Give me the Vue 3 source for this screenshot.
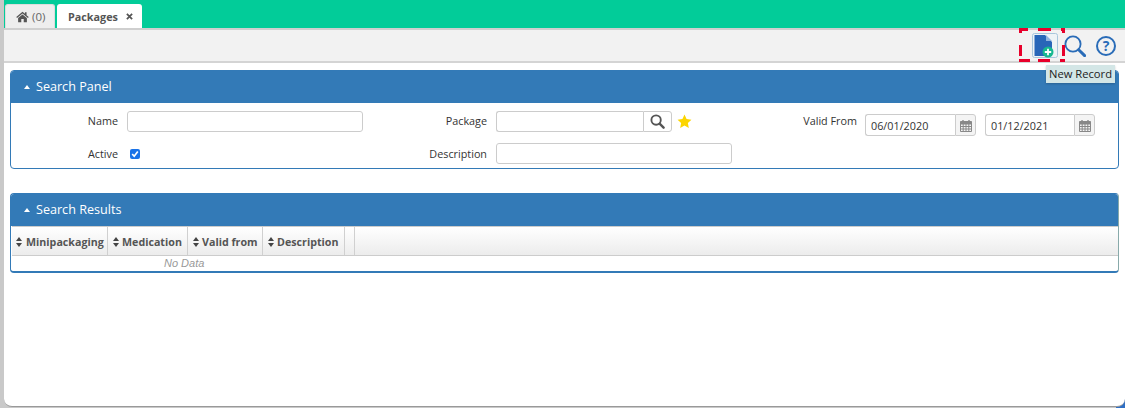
<template>
  <div class="page">
    <div class="gutter"></div>
    <div class="main">
      <div class="tabbar">
        <div class="tab home">
          <svg class="home-ico" viewBox="0 0 16 14" width="13" height="12"><path fill="#555" d="M8 0.5 L0.3 7 L1.3 8.2 L8 2.6 L14.7 8.2 L15.7 7 L13 4.7 V1 H11 V3 Z M8 3.8 L2.6 8.3 V13.5 H6.5 V9.5 H9.5 V13.5 H13.4 V8.3 Z"/></svg>
          <span class="count">(0)</span>
        </div>
        <div class="tab active">
          <span class="tab-title">Packages</span>
          <svg class="close" viewBox="0 0 8 8" width="7" height="7"><path d="M1 1 L7 7 M7 1 L1 7" stroke="#555" stroke-width="2"/></svg>
        </div>
      </div>

      <div class="toolbar">
        <div class="tool-wrap">
          <svg class="doc" viewBox="0 0 26 25" width="26" height="25">
            <rect x="0.5" y="0.5" width="25" height="24" rx="2" fill="#eef3f6" stroke="#a9c6dc"/>
            <path d="M2.5 2 H13 L20 9 V23 H2.5 Z" fill="#2866b8"/>
            <path d="M14 2 L20 8 H14 Z" fill="#8fb3de"/>
            <circle cx="16" cy="19" r="5.5" fill="#17b890"/>
            <path d="M16 15.8 V22.2 M12.8 19 H19.2" stroke="#fff" stroke-width="1.8"/>
          </svg>
          <svg class="dash" viewBox="0 0 46 34" width="46" height="34">
            <path fill="none" stroke="#e8002b" stroke-width="3" d="M0 1.5H9 M19 1.5H32 M42 1.5H46 M0 32.5H11 M19 32.5H31 M41 32.5H46 M1.5 0V5 M1.5 17V28 M1.5 32V34 M44.5 0V5 M44.5 17V28 M44.5 32V34"/>
          </svg>
        </div>
        <svg class="search" viewBox="0 0 24 24" width="22" height="22"><circle cx="9.8" cy="9.8" r="8.3" fill="none" stroke="#2a6cb8" stroke-width="2"/><path d="M16 16 L22.5 22.5" stroke="#2a6cb8" stroke-width="3.2" stroke-linecap="round"/></svg>
        <span class="help">?</span>
        <div class="tooltip">New Record</div>
      </div>

      <section class="panel search-panel">
        <header class="panel-head"><span class="caret"></span>Search Panel</header>
        <div class="form">
          <label class="lbl first">Name</label>
          <div class="field"><input class="input wide" type="text" /></div>
          <label class="lbl first">Package</label>
          <div class="field pkg">
            <div class="group">
              <input class="input grouped" type="text" />
              <span class="addon lookup">
                <svg viewBox="0 0 16 16" width="15" height="15"><circle cx="6.5" cy="6.5" r="5" fill="none" stroke="#555" stroke-width="2"/><path d="M10.5 10.5 L14.5 14.5" stroke="#555" stroke-width="2.6" stroke-linecap="round"/></svg>
              </span>
            </div>
            <svg class="star" viewBox="0 0 16 16" width="15" height="15"><path fill="#fcd500" d="M8 0.6 L10.2 5.4 L15.4 6 L11.6 9.6 L12.6 14.8 L8 12.2 L3.4 14.8 L4.4 9.6 L0.6 6 L5.8 5.4 Z"/></svg>
          </div>
          <label class="lbl first l3">Valid From</label>
          <div class="field dates">
            <div class="group date" v-for="d in dates" :key="d.v" :style="{ width: d.w + 'px' }">
              <input class="input grouped tall" type="text" :value="d.v" />
              <span class="addon cal">
                <svg viewBox="0 0 12 13" width="12" height="13"><path d="M0.5 2.5 H11.5 V12.5 H0.5 Z M0.5 5 H11.5 M0.5 7.5 H11.5 M0.5 10 H11.5 M3.2 5 V12.5 M6 5 V12.5 M8.8 5 V12.5" fill="none" stroke="#888" stroke-width="1"/><path d="M0.5 2.5 H11.5 V5 H0.5 Z" fill="#888"/><path d="M3 1 V3 M9 1 V3" stroke="#888" stroke-width="1.4"/></svg>
              </span>
            </div>
          </div>

          <label class="lbl">Active</label>
          <div class="field check"><span class="checkbox"><svg viewBox="0 0 10 10" width="10" height="10"><path d="M2.2 5 L4.2 7.2 L7.8 2.6" fill="none" stroke="#fff" stroke-width="1.7"/></svg></span></div>
          <label class="lbl">Description</label>
          <div class="field"><input class="input wide" type="text" /></div>
          <div></div>
          <div></div>
        </div>
      </section>

      <section class="panel results-panel">
        <header class="panel-head"><span class="caret"></span>Search Results</header>
        <div class="thead">
          <div class="th" v-for="c in cols" :key="c.t" :style="{ width: c.w + 'px' }">
            <span class="sort"><i class="up"></i><i class="down"></i></span>{{ c.t }}
          </div>
          <div class="th spacer"></div>
          <div class="th fill"></div>
        </div>
        <div class="nodata">No Data</div>
      </section>
      <div class="grow"></div>
    </div>
  </div>
</template>

<script setup>
const dates = [
  { v: '06/01/2020', w: 111 },
  { v: '01/12/2021', w: 110 }
]
const cols = [
  { t: 'Minipackaging', w: 96 },
  { t: 'Medication', w: 80 },
  { t: 'Valid from', w: 75 },
  { t: 'Description', w: 82 }
]
</script>

<style>
html, body { margin: 0; padding: 0; background: #fff; overflow: hidden; }
</style>

<style scoped>
.page {
  width: 1125px;
  height: 408px;
  display: flex;
  font-family: "Open Sans", sans-serif;
  font-size: 10.8px;
  color: #333;
  background: linear-gradient(90deg, #c9c9c9 0 1116px, #2f6fc4 1116px);
  overflow: hidden;
}
.gutter { width: 4px; background: #c9c9c9; flex: none; }
.main {
  flex: 1;
  display: flex;
  flex-direction: column;
  background: #fff;
  height: 407px;
  box-sizing: border-box;
  border-bottom: 1px solid #999;
  border-radius: 0 0 8px 8px;
  overflow: hidden;
  position: relative;
}
.tabbar {
  height: 28px;
  background: #02cc99;
  display: flex;
  align-items: flex-end;
  padding-left: 1px;
  gap: 2px;
  flex: none;
}
.tab {
  height: 24px;
  border-radius: 3px 3px 0 0;
  display: flex;
  align-items: center;
  box-sizing: border-box;
  color: #555;
}
.home { width: 50px; background: #eee; padding-left: 10px; gap: 3px; border: 1px solid #ddd; border-bottom: none; }
.count { font-size: 11.5px; color: #666; }
.active { width: 85px; background: #fff; padding-left: 11px; }
.tab-title { font-weight: 700; font-size: 10.8px; }
.close { margin-left: 8px; }
.toolbar {
  height: 35px;
  box-sizing: border-box;
  flex: none;
  border-top: 2px solid #cfcfcf;
  border-bottom: 2px solid #d4d4d4;
  background: #f2f2f2;
  display: flex;
  align-items: center;
  justify-content: flex-end;
  padding-right: 9px;
  position: relative;
  z-index: 2;
}
.tool-wrap { position: relative; display: flex; margin-right: 6px; }
.dash {
  position: absolute;
  left: -13px;
  top: -5px;
}
.search { margin-right: 10px; }
.help {
  width: 20px;
  height: 20px;
  box-sizing: border-box;
  border: 2px solid #2a6cb8;
  border-radius: 50%;
  color: #2a6cb8;
  font-weight: 700;
  font-size: 14px;
  line-height: 16px;
  text-align: center;
}
.tooltip {
  position: absolute;
  left: 1042px;
  top: 35px;
  width: 69px;
  height: 18px;
  background: #d3e6e6;
  color: #222;
  font-size: 11.2px;
  line-height: 18px;
  text-align: center;
  box-shadow: 0 1px 2px rgba(0, 0, 0, 0.2);
}
.panel {
  flex: none;
  margin: 0 6px 0 6px;
  width: 1109px;
  box-sizing: border-box;
  border: 1px solid #337ab7;
  border-radius: 4px;
  overflow: hidden;
  background: #fff;
}
.search-panel { margin-top: 7px; height: 99px; }
.results-panel { margin-top: 24px; height: 80px; border-bottom-width: 2px; border-right-color: #8aa; }
.panel-head {
  height: 32px;
  box-sizing: border-box;
  background: #337ab7;
  color: #fff;
  font-size: 12.6px;
  padding: 0 0 2px 13px;
  display: flex;
  align-items: center;
}
.caret {
  width: 0;
  height: 0;
  border-left: 3.5px solid transparent;
  border-right: 3.5px solid transparent;
  border-bottom: 4px solid #fff;
  margin-right: 6px;
  margin-top: 2px;
}
.form {
  display: grid;
  grid-template-columns: 116px 236px 133px 236px 133px 230px;
  grid-template-rows: 21px 21px;
  row-gap: 11px;
  padding-top: 8px;
  align-items: center;
}
.lbl { text-align: right; padding-right: 9px; }
.first { margin-top: -2px; }
.l3 { padding-right: 8px; }
.field { display: flex; align-items: center; }
.input {
  height: 21px;
  box-sizing: border-box;
  border: 1px solid #ccc;
  border-radius: 3px;
  background: #fff;
  padding: 0 5px;
  font-family: inherit;
  font-size: 10.8px;
  color: #333;
  outline: none;
  margin: 0;
}
.wide { width: 236px; }
.tall { height: 22px; }
.group { display: flex; height: 21px; }
.date { height: 22px; }
.pkg .group { width: 176px; }
.dates { gap: 9px; align-self: start; margin-top: 3px; }
.grouped { flex: 1; min-width: 0; border-radius: 3px 0 0 3px; border-right: none; }
.addon {
  border: 1px solid #ccc;
  border-radius: 0 3px 3px 0;
  display: flex;
  align-items: center;
  justify-content: center;
  box-sizing: border-box;
}
.lookup { width: 29px; }
.cal { width: 21px; background: #f4f4f4; }
.star { margin-left: 5px; }
.checkbox {
  width: 10px;
  height: 10px;
  background: #1a73e8;
  border-radius: 2px;
  margin-left: 3px;
  display: flex;
}
.thead {
  display: flex;
  height: 30px;
  background: linear-gradient(#fff, #ececec);
  border-top: 1px solid #ccc;
  border-bottom: 1px solid #ccc;
  box-sizing: border-box;
  margin-left: 1px;
}
.th {
  box-sizing: border-box;
  border-right: 1px solid #d0d0d0;
  display: flex;
  align-items: center;
  font-weight: 700;
  font-size: 10.7px;
  color: #555;
  padding: 2px 0 0 5px;
  white-space: nowrap;
}
.th:first-child { padding-left: 4px; }
.th:first-child .sort { margin-right: 4px; }
.spacer { width: 10px; padding: 0; }
.fill { flex: 1; border-right: none; }
.sort { display: inline-flex; flex-direction: column; gap: 2px; margin-right: 3px; }
.sort i { display: block; width: 0; height: 0; border-left: 3px solid transparent; border-right: 3px solid transparent; }
.sort .up { border-bottom: 4px solid #444; }
.sort .down { border-top: 4px solid #444; }
.nodata {
  height: 15px;
  line-height: 14px;
  font-style: italic;
  color: #999;
  font-size: 11px;
  padding-left: 153px;
  font-family: "Liberation Sans", sans-serif;
}
.grow { flex: 1; }
</style>
